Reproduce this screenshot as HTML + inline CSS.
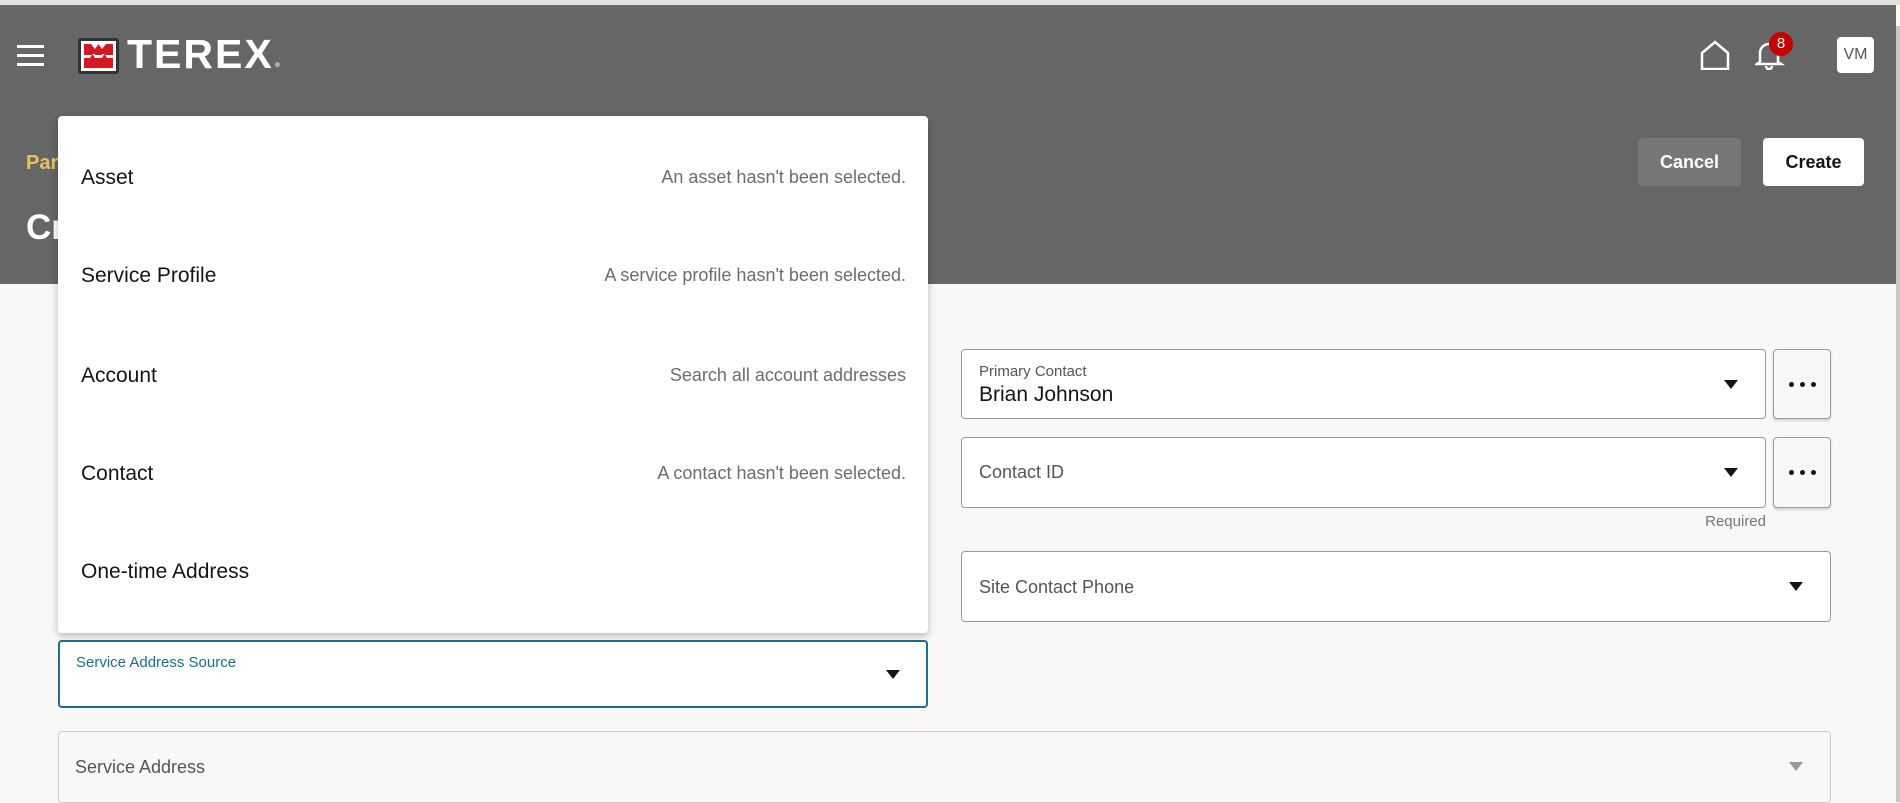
<!DOCTYPE html>
<html><head><meta charset="utf-8"><style>
*{box-sizing:border-box;margin:0;padding:0}
body{width:1900px;height:802px;overflow:hidden;background:#f9f8f6;font-family:"Liberation Sans",sans-serif;position:relative}
.abs{position:absolute}
.top{left:0;top:0;width:1900px;height:5px;background:#e5e2de}
.hdr{left:0;top:5px;width:1896px;height:279px;background:#666}
.sb{left:1896px;top:26px;width:4px;height:776px;background:#c8c8c8}
.ham span{position:absolute;left:0;width:27px;height:3px;background:#fff}
.field{background:#fff;border:1px solid #9a9a9a;border-radius:4px}
.lbl{font-size:15px;color:#555}
.arrow{width:0;height:0;border-left:7px solid transparent;border-right:7px solid transparent;border-top:9px solid #161513}
.dots{background:#f9f8f6;border:1px solid #9a9a9a;border-radius:4px;box-shadow:0 2px 2px rgba(0,0,0,.15)}
.dots i{position:absolute;top:32px;width:5px;height:5px;border-radius:50%;background:#161513}
.dd{left:58px;top:116px;width:870px;height:517px;background:#fff;border-radius:4px;box-shadow:0 3px 8px rgba(0,0,0,.25)}
.it{position:absolute;left:23px;font-size:21px;color:#161513}
.hint{position:absolute;right:22px;font-size:18px;color:#6d6d6d}
</style></head><body>
<div class="abs top"></div>
<div class="abs hdr"></div>
<div class="abs sb"></div>
<div class="abs ham" style="left:17px;top:45px;width:27px;height:22px"><span style="top:0"></span><span style="top:9px"></span><span style="top:18px"></span></div>
<div class="abs" style="left:78px;top:38px;width:41px;height:36px;background:#333;border-radius:3px;padding:3px">
<svg width="35" height="30" viewBox="0 0 35 30"><rect width="35" height="30" fill="#fff"/><path d="M3 3H10L14 8 17.5 3 21 8 25 3H32V13H3Z" fill="#d51920"/><path d="M3 17H9L11.5 13 14 17H21L23.5 13 26 17H32V27H3Z" fill="#d51920"/><path d="M3 13H32" stroke="#d51920" stroke-width="0"/><rect x="3" y="11" width="8" height="3" fill="#d51920"/><rect x="24" y="11" width="8" height="3" fill="#d51920"/><rect x="14" y="11" width="7" height="3" fill="#d51920"/></svg></div>
<div class="abs" style="left:127px;top:31px;font-size:41px;font-weight:bold;color:#fff;letter-spacing:2px">TEREX<span style="font-size:12px;color:#aaa;letter-spacing:0">●</span></div>
<svg class="abs" style="left:1700px;top:40px" width="30" height="30" viewBox="0 0 30 30"><path d="M2 29V13L15 2 28 13V29Z" fill="none" stroke="#fff" stroke-width="2.5"/></svg>
<svg class="abs" style="left:1755px;top:40px" width="30" height="30" viewBox="0 0 30 30"><path d="M5 22V13a9 9 0 0 1 18 0v9l3 2H2z" fill="none" stroke="#fff" stroke-width="2.5"/><path d="M11 26a3 3 0 0 0 6 0" fill="none" stroke="#fff" stroke-width="2.5"/></svg>
<div class="abs" style="left:1769px;top:32px;width:24px;height:24px;border-radius:50%;background:#c40000;color:#fff;font-size:15px;text-align:center;line-height:24px">8</div>
<div class="abs" style="left:1837px;top:37px;width:37px;height:36px;background:#fff;border-radius:4px;color:#555;font-size:16px;text-align:center;line-height:36px">VM</div>
<div class="abs" style="left:1638px;top:138px;width:103px;height:48px;background:#777;border-radius:4px;color:#fff;font-weight:bold;font-size:18px;text-align:center;line-height:48px">Cancel</div>
<div class="abs" style="left:1763px;top:138px;width:101px;height:48px;background:#fff;border-radius:4px;color:#161513;font-weight:bold;font-size:18px;text-align:center;line-height:48px">Create</div>
<div class="abs" style="left:26px;top:152px;font-size:20px;font-weight:bold;color:#e8c060">Parts</div>
<div class="abs" style="left:26px;top:208px;font-size:35px;font-weight:bold;color:#fff">Create</div>

<div class="abs field" style="left:58px;top:349px;width:870px;height:70px"></div>

<div class="abs field" style="left:961px;top:349px;width:805px;height:70px">
<div class="abs lbl" style="left:17px;top:13px;font-size:15px">Primary Contact</div>
<div class="abs" style="left:17px;top:33px;font-size:21px;color:#161513">Brian Johnson</div>
<div class="abs arrow" style="left:762px;top:30px"></div></div>
<div class="abs dots" style="left:1773px;top:349px;width:58px;height:70px"><i style="left:15px"></i><i style="left:26px"></i><i style="left:37px"></i></div>

<div class="abs field" style="left:961px;top:437px;width:805px;height:71px">
<div class="abs lbl" style="left:17px;top:24px;font-size:18px">Contact ID</div>
<div class="abs arrow" style="left:762px;top:30px"></div></div>
<div class="abs dots" style="left:1773px;top:437px;width:58px;height:71px"><i style="left:15px"></i><i style="left:26px"></i><i style="left:37px"></i></div>
<div class="abs" style="left:1666px;top:513px;width:100px;text-align:right;font-size:15px;color:#777">Required</div>

<div class="abs field" style="left:961px;top:551px;width:870px;height:71px">
<div class="abs lbl" style="left:17px;top:25px;font-size:18px">Site Contact Phone</div>
<div class="abs arrow" style="left:827px;top:30px"></div></div>

<div class="abs" style="left:58px;top:640px;width:870px;height:68px;background:#fff;border:2px solid #1f6e8c;border-radius:4px">
<div class="abs" style="left:16px;top:12px;font-size:15px;color:#1a6c8e">Service Address Source</div>
<div class="abs arrow" style="left:826px;top:28px"></div></div>

<div class="abs" style="left:58px;top:731px;width:1773px;height:72px;background:#f9f8f6;border:1px solid #ccc;border-radius:4px">
<div class="abs" style="left:16px;top:25px;font-size:18px;color:#555">Service Address</div>
<div class="abs arrow" style="left:1730px;top:30px;border-top-color:#999"></div></div>

<div class="abs dd">
<div class="it" style="top:50px">Asset</div><div class="hint" style="top:51px">An asset hasn't been selected.</div>
<div class="it" style="top:148px">Service Profile</div><div class="hint" style="top:149px">A service profile hasn't been selected.</div>
<div class="it" style="top:248px">Account</div><div class="hint" style="top:249px">Search all account addresses</div>
<div class="it" style="top:346px">Contact</div><div class="hint" style="top:347px">A contact hasn't been selected.</div>
<div class="it" style="top:444px">One-time Address</div>
</div>
</body></html>
